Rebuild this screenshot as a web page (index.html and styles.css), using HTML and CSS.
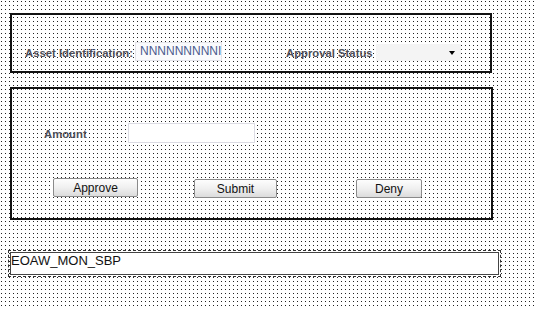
FILE: index.html
```html
<!DOCTYPE html>
<html>
<head>
<meta charset="utf-8">
<link rel="stylesheet" href="styles.css">
</head>
<body>
<div class="screen">
  <div class="panel panel-top">
    <span class="lbl lbl-asset">Asset Identification:</span>
    <div class="txt txt-asset">NNNNNNNNNI</div>
    <span class="lbl lbl-status">Approval Status</span>
    <div class="select">
      <span class="arrow"></span>
    </div>
  </div>
  <div class="panel panel-mid">
    <div class="row row-amount">
      <span class="lbl lbl-amount">Amount</span>
      <div class="txt txt-amount"></div>
    </div>
    <div class="row row-buttons">
      <button class="btn btn-approve">Approve</button>
      <button class="btn btn-submit">Submit</button>
      <button class="btn btn-deny">Deny</button>
    </div>
  </div>
  <div class="field">
    <div class="field-inner">EOAW_MON_SBP</div>
  </div>
</div>
</body>
</html>
```
FILE: styles.css
```css
html, body {
  margin: 0;
  padding: 0;
  background: #fff;
}
body {
  width: 541px;
  height: 311px;
  overflow: hidden;
  font-family: "Liberation Sans", Arial, sans-serif;
}
.screen {
  width: 537px;
  height: 307px;
  box-sizing: border-box;
  padding-top: 13px;
  background-color: #fff;
  background-image: conic-gradient(at 1px 1px, transparent 75%, #222 0);
  background-size: 4px 4px;
  background-position: 1px 1px;
  display: flex;
  flex-direction: column;
}
.panel {
  border: 2px solid #111;
  box-sizing: border-box;
  margin-left: 10px;
}
.panel-top {
  width: 482px;
  height: 60px;
  display: flex;
  align-items: center;
  padding: 17px 0 0 13px;
}
.lbl {
  font-size: 11.3px;
  font-weight: bold;
  color: #4e4e58;
  white-space: nowrap;
}
.lbl-asset {
  margin-top: 3px;
}
.txt {
  box-sizing: border-box;
  background: #fafafc;
  border: 1px solid #e4e4ea;
  color: #4b5a8e;
  font-size: 12px;
  line-height: 17px;
  padding-left: 4px;
}
.txt-asset {
  margin-left: 2px;
  width: 87px;
  height: 19px;
}
.lbl-status {
  margin-left: 64px;
  margin-top: 3px;
}
.select {
  margin-left: 3px;
  width: 85px;
  height: 17px;
  background: #f4f4f4;
  display: flex;
  align-items: center;
  justify-content: flex-end;
  padding-right: 6px;
  box-sizing: border-box;
  margin-top: 2px;
}
.arrow {
  width: 0;
  height: 0;
  border-left: 3.5px solid transparent;
  border-right: 3.5px solid transparent;
  border-top: 4px solid #000;
}
.panel-mid {
  margin-top: 14px;
  width: 483px;
  height: 133px;
  padding-top: 34px;
  display: flex;
  flex-direction: column;
}
.row {
  display: flex;
  align-items: center;
}
.lbl-amount {
  margin-left: 32px;
  margin-top: 2px;
}
.txt-amount {
  margin-left: 41px;
  width: 127px;
  height: 20px;
  background: #fff;
  border-color: #dcdce4;
}
.row-buttons {
  margin-top: 35px;
  align-items: flex-start;
}
.btn {
  box-sizing: border-box;
  height: 19px;
  font-family: "Liberation Sans", Arial, sans-serif;
  font-size: 12px;
  color: #111;
  border: 1px solid #8a8a8a;
  border-radius: 2px;
  background: linear-gradient(#fdfdfd, #f0f0f0 50%, #dcdcdc);
  padding: 0;
  line-height: 16px;
  margin-top: 1px;
}
.btn-approve {
  margin-left: 41px;
  width: 85px;
  margin-top: 0;
}
.btn-submit {
  margin-left: 56px;
  width: 83px;
}
.btn-deny {
  margin-left: 79px;
  width: 66px;
}
.field {
  margin-top: 30px;
  margin-left: 8px;
  width: 493px;
  height: 27px;
  box-sizing: border-box;
  border: 1px dashed #333;
  padding: 1px;
}
.field-inner {
  box-sizing: border-box;
  height: 100%;
  background: #fff;
  border: 1px solid #444;
  font-size: 13px;
  color: #111;
  line-height: 15px;
  padding-left: 0;
}
```
